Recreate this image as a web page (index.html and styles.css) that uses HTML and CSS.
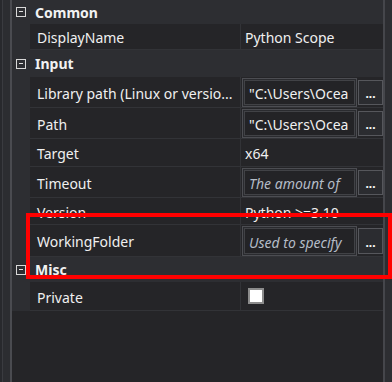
FILE: index.html
```html
<!DOCTYPE html>
<html lang="en">

<head>
    <meta charset="UTF-8">
    <meta name="viewport" content="width=device-width, initial-scale=1.0">
    <title>Properties - Python Scope</title>
    <link rel="stylesheet" href="styles.css">
</head>

<body>
    <div class="grid">
        <div class="gutter"></div>

        <div class="props">
            <!-- Common -->
            <div class="cat cat-common">
                <span class="toggle"></span>
                <span class="cat-name">Common</span>
            </div>
            <div class="prop h26">
                <div class="indent"></div>
                <div class="name">DisplayName</div>
                <div class="value">Python Scope</div>
            </div>

            <!-- Input -->
            <div class="cat cat-input">
                <span class="toggle"></span>
                <span class="cat-name">Input</span>
            </div>
            <div class="prop h31">
                <div class="indent"></div>
                <div class="name">Library path (Linux or versio...</div>
                <div class="value edit">
                    <div class="textbox">"C:\Users\Ocea</div>
                    <div class="dots">...</div>
                </div>
            </div>
            <div class="prop h31">
                <div class="indent"></div>
                <div class="name">Path</div>
                <div class="value edit">
                    <div class="textbox">"C:\Users\Ocea</div>
                    <div class="dots">...</div>
                </div>
            </div>
            <div class="prop h28">
                <div class="indent"></div>
                <div class="name">Target</div>
                <div class="value">x64</div>
            </div>
            <div class="prop h31">
                <div class="indent"></div>
                <div class="name">Timeout</div>
                <div class="value edit">
                    <div class="textbox hint">The amount of</div>
                    <div class="dots">...</div>
                </div>
            </div>
            <div class="prop h27">
                <div class="indent"></div>
                <div class="name">Version</div>
                <div class="value">Python &gt;=3.10</div>
            </div>
            <div class="prop h32">
                <div class="indent"></div>
                <div class="name">WorkingFolder</div>
                <div class="value edit">
                    <div class="textbox hint">Used to specify</div>
                    <div class="dots">...</div>
                </div>
            </div>

            <!-- Misc -->
            <div class="cat">
                <span class="toggle"></span>
                <span class="cat-name">Misc</span>
            </div>
            <div class="prop h29">
                <div class="indent"></div>
                <div class="name">Private</div>
                <div class="value">
                    <span class="check"></span>
                </div>
            </div>
        </div>

        <div class="scroll"></div>
    </div>

    <!-- annotation -->
    <div class="highlight"></div>
</body>

</html>
```

FILE: styles.css
```css
body, html {
    margin: 0;
    padding: 0;
    height: 100%;
    font-family: "Noto Sans", "Open Sans", sans-serif;
    font-size: 14px;
    background-color: #252528;
    color: #f0f0f0;
    overflow: hidden;
}

.grid {
    display: flex;
    height: 100%;
}

.gutter {
    width: 12px;
    flex: none;
    background: linear-gradient(to right, #28292d 0 2px, #3a3b40 2px 3px, #2c2d31 3px 10px, #4a4b50 10px 12px);
}

.props {
    flex: 1;
    display: flex;
    flex-direction: column;
    background-color: #252528;
}

.scroll {
    width: 9px;
    flex: none;
    background: linear-gradient(to right, #45464b 0 2px, #2d2e32 2px);
}

/* categories */
.cat {
    height: 25px;
    display: flex;
    align-items: center;
    background-color: #2d2e32;
}

.cat-common {
    height: 24px;
}

.cat-input {
    height: 27px;
}

.toggle {
    width: 8px;
    height: 8px;
    border: 1px solid #d8d8d8;
    margin-left: 4px;
    margin-right: 9px;
    position: relative;
}

.toggle::after {
    content: "";
    position: absolute;
    left: 2px;
    top: 3px;
    width: 4px;
    height: 1px;
    background-color: #e0e0e0;
}

.cat-name {
    font-weight: bold;
    font-size: 14px;
    color: #f2f2f2;
}

/* property rows */
.prop {
    display: flex;
}

.h26 { height: 26px; }
.h27 { height: 27px; }
.h28 { height: 28px; }
.h29 { height: 29px; }
.h31 { height: 31px; }
.h32 { height: 32px; }

.indent {
    width: 18px;
    flex: none;
    background-color: #2d2e32;
}

.name {
    width: 203px;
    flex: none;
    padding-left: 7px;
    padding-top: 2px;
    display: flex;
    align-items: center;
    white-space: nowrap;
    overflow: hidden;
    border-bottom: 1px solid #323337;
}

.value {
    flex: 1;
    min-width: 0;
    padding-left: 4px;
    padding-top: 2px;
    display: flex;
    align-items: center;
    border-left: 1px solid #323337;
    border-bottom: 1px solid #323337;
}

.value.edit {
    padding-left: 1px;
    padding-top: 1px;
    gap: 1px;
    align-items: stretch;
}

.textbox {
    width: 115px;
    flex: none;
    box-sizing: border-box;
    padding-left: 6px;
    padding-top: 2px;
    display: flex;
    align-items: center;
    white-space: nowrap;
    overflow: hidden;
    border: 1px solid #4c4d52;
    box-shadow: inset 0 0 0 1px #2a2b2f, inset 0 0 0 2px #414246;
    background-color: #232326;
    color: #f0f0f0;
}

.textbox.hint {
    font-style: italic;
    color: #b4bcc6;
}

.dots {
    width: 25px;
    flex: none;
    box-sizing: border-box;
    margin: 2px 0 2px;
    border: 1px solid #56575c;
    background-color: #2b2c30;
    color: #ffffff;
    font-weight: bold;
    font-size: 12px;
    display: flex;
    justify-content: center;
    align-items: flex-end;
    padding-bottom: 4px;
    line-height: 1;
}

.check {
    width: 16px;
    height: 16px;
    box-sizing: border-box;
    margin-left: 3px;
    margin-top: -2px;
    border: 2px solid #8c8c8c;
    background-color: #ffffff;
}

/* red annotation box */
.highlight {
    position: absolute;
    left: 26px;
    top: 213px;
    width: 366px;
    height: 66px;
    box-sizing: border-box;
    border: 4px solid #ff0000;
}
```
